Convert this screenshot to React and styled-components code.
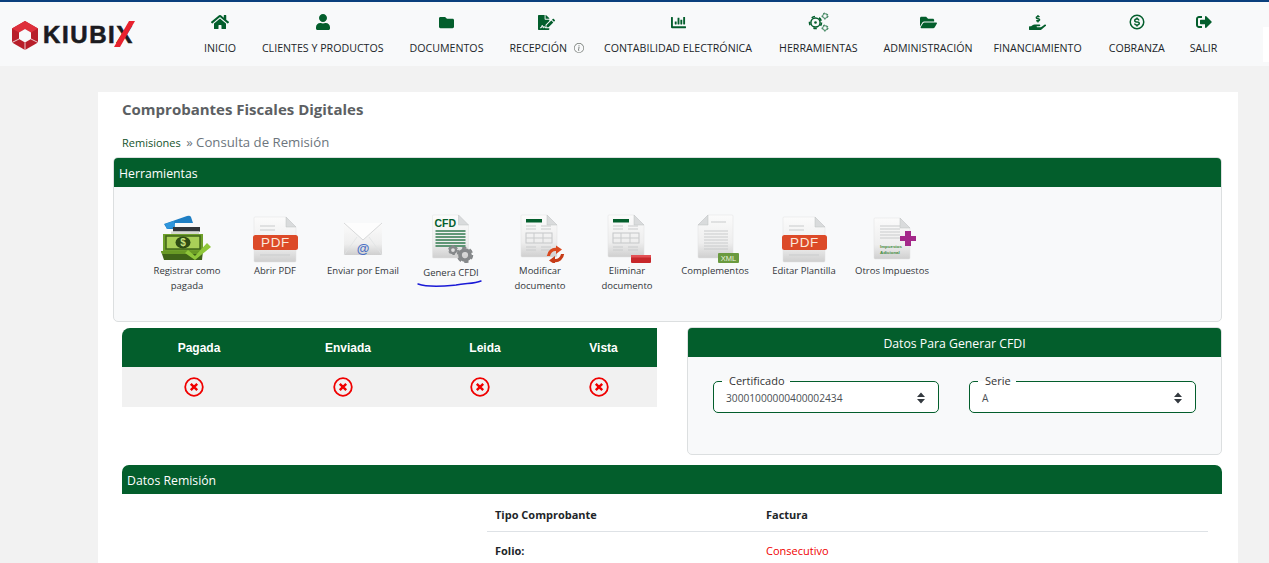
import React from "react";
import styled, { createGlobalStyle } from "styled-components";
import {
  FaHome, FaUser, FaFolder, FaFileSignature, FaChartBar, FaFolderOpen,
  FaHandHoldingUsd, FaSignOutAlt,
} from "react-icons/fa";
import { BsInfoCircle } from "react-icons/bs";
import { BiDollarCircle } from "react-icons/bi";

const GREEN = "#035e2c";
const SANS = `"Open Sans", "Liberation Sans", sans-serif`;

const Global = createGlobalStyle`
  html, body { margin: 0; padding: 0; background: #f2f2f2; }
  body { font-family: ${SANS}; overflow: hidden; }
  #root { height: 563px; overflow: hidden; }
  * { box-sizing: border-box; }
`;

const TopBar = styled.header`
  display: flex;
  height: 66px;
  background: #f8f9fa;
  border-top: 2px solid #0a3f7d;
`;
const LogoBox = styled.div`
  width: 204px;
  flex: none;
  display: flex;
  align-items: flex-start;
  padding: 19px 0 0 11px;
`;
const LogoWord = styled.span`
  position: relative;
  font-family: "Liberation Sans", Arial, sans-serif;
  font-weight: 700;
  font-size: 24px;
  line-height: 27px;
  letter-spacing: 1.6px;
  color: #1b1b1f;
  margin-left: 4px;
  -webkit-text-stroke: 0.6px #1b1b1f;
`;
const LogoSlash = styled.svg`
  position: absolute;
  right: -2px;
  top: -1px;
`;
const Nav = styled.nav`
  display: flex;
  flex: 1;
  padding-top: 10px;
`;
const NavItem = styled.a`
  display: flex;
  flex-direction: column;
  align-items: center;
  flex: none;
  margin-right: ${(p) => p.$gap}px;
  color: #212529;
`;
const NavIcon = styled.span`
  height: 20px;
  display: flex;
  align-items: center;
  justify-content: center;
  color: ${GREEN};
`;
const NavLabel = styled.span`
  display: flex;
  align-items: center;
  gap: 7px;
  margin-top: 8px;
  font-size: 10.65px;
  line-height: 16px;
  white-space: nowrap;
`;
const InfoMark = styled(BsInfoCircle)`
  color: #6f7570;
`;
const CornerTab = styled.div`
  width: 6px;
  height: 35px;
  margin-top: 15px;
  margin-left: auto;
  background: #fff;
  flex: none;
`;
const Card = styled.main`
  width: 1140px;
  margin: 26px 0 0 98px;
  padding: 7px 16px 0 15px;
  background: #fff;
  height: 500px;
`;
const Title = styled.h1`
  margin: 0 0 0 9px;
  font-size: 15px;
  line-height: 20px;
  font-weight: 700;
  color: #5c5f63;
`;
const Crumbs = styled.div`
  margin: 13px 0 0 9px;
  font-size: 13.2px;
  line-height: 20px;
  color: #6c757d;
`;
const CrumbLink = styled.a`
  font-size: 11px;
  margin-right: 2px;
  color: #14532d;
`;
const Panel = styled.section`
  border: 1px solid #dcdfe0;
  border-radius: 5px;
  background: #f8f9fa;
  overflow: hidden;
`;
const PanelHead = styled.div`
  height: 29px;
  padding-left: ${(p) => (p.$center ? 0 : 5)}px;
  background: ${GREEN};
  color: #fff;
  font-size: 12.25px;
  line-height: 31px;
  text-align: ${(p) => (p.$center ? "center" : "left")};
`;
const ToolsPanel = styled(Panel)`
  margin-top: 4px;
  height: 165px;
`;
const ToolRow = styled.div`
  display: flex;
  padding: 26px 0 0 29px;
`;
const Tool = styled.div`
  position: relative;
  width: ${(p) => p.$w}px;
  flex: none;
  display: flex;
  flex-direction: column;
  align-items: center;
`;
const ToolLabel = styled.span`
  margin-top: ${(p) => p.$drop || 0}px;
  font-size: 9.5px;
  line-height: 15px;
  text-align: center;
  white-space: nowrap;
  color: #33373a;
`;
const HandLine = styled.svg`
  position: absolute;
  left: 9px;
  top: 66px;
`;
const Row = styled.div`
  display: flex;
  justify-content: space-between;
  margin: 5px 0 0 9px;
`;
const StatusTable = styled.div`
  width: 535px;
  height: 79px;
  margin-top: 1px;
  display: grid;
  grid-template-columns: 154px 144px 130px 107px;
  grid-template-rows: 39px 40px;
  background: #f1f1f1;
  border-top-left-radius: 8px;
  overflow: hidden;
`;
const StatusHead = styled.div`
  background: ${GREEN};
  color: #fff;
  font-family: "Liberation Sans", Arial, sans-serif;
  font-weight: 700;
  font-size: 12px;
  display: flex;
  align-items: center;
  justify-content: center;
`;
const StatusCell = styled.div`
  display: flex;
  align-items: center;
  justify-content: center;
  padding-right: 10px;
`;
const DataPanel = styled(Panel)`
  width: 535px;
  height: 128px;
`;
const Fields = styled.div`
  display: flex;
  gap: 30px;
  padding: 17px 0 0 25px;
`;
const Field = styled.fieldset`
  width: ${(p) => p.$w}px;
  height: 39px;
  margin: 0;
  padding: 0 13px 0 12px;
  border: 1px solid ${GREEN};
  border-radius: 5px;
  display: flex;
  background: #fff;
`;
const Legend = styled.legend`
  margin-left: -4px;
  padding: 0 5px 0 7px;
  font-size: 11px;
  line-height: 14px;
  color: #333;
`;
const FieldValue = styled.div`
  flex: 1;
  display: flex;
  align-items: center;
  justify-content: space-between;
  font-size: 10.2px;
  line-height: 22px;
  height: 22px;
  margin-top: -1px;
  color: #4b5055;
`;
const DetailPanel = styled.section`
  margin: 10px 0 0 9px;
`;
const DetailHead = styled(PanelHead)`
  border-radius: 7px 7px 0 0;
`;
const DetailRow = styled.div`
  display: grid;
  grid-template-columns: 271px 1fr;
  margin: 0 14px 0 365px;
  padding: ${(p) => p.$pad}px 0 0 8px;
  height: ${(p) => p.$h}px;
  align-items: center;
  font-size: 11px;
  border-bottom: ${(p) => (p.$line ? "1px solid #dee2e6" : "none")};
`;
const DetailKey = styled.strong`
  font-weight: 700;
  color: #212529;
`;
const DetailValue = styled.span`
  color: ${(p) => p.$color};
  font-weight: ${(p) => p.$weight};
`;
const HiddenDefs = styled.svg`
  position: absolute;
  width: 0;
  height: 0;
`;

function SmallGear({ x, y, r }) {
  return (
    <g transform={`translate(${x} ${y})`} fill="none" stroke={GREEN}>
      <circle r={r} strokeWidth={r * 0.32} />
      <circle r={r * 1.3} strokeWidth={r * 0.35} strokeDasharray={`${r * 0.75} ${r * 0.95}`} />
    </g>
  );
}
const GearsIcon = () => (
  <svg width="21" height="20" viewBox="0 0 21 20">
    <SmallGear x={7.5} y={10.5} r={4.6} />
    <circle cx="7.5" cy="10.5" r="1.3" fill={GREEN} />
    <SmallGear x={17} y={4} r={2.3} />
    <SmallGear x={17} y={16} r={2.3} />
  </svg>
);

const NAV = [
  { label: "INICIO", gap: 26, icon: <FaHome size={18} /> },
  { label: "CLIENTES Y PRODUCTOS", gap: 26, icon: <FaUser size={16} /> },
  { label: "DOCUMENTOS", gap: 26, icon: <FaFolder size={15} /> },
  { label: "RECEPCIÓN", gap: 20, icon: <FaFileSignature size={17} />, info: true },
  { label: "CONTABILIDAD ELECTRÓNICA", gap: 27, icon: <FaChartBar size={15} /> },
  { label: "HERRAMIENTAS", gap: 26, icon: <GearsIcon /> },
  { label: "ADMINISTRACIÓN", gap: 21, icon: <FaFolderOpen size={17} /> },
  { label: "FINANCIAMIENTO", gap: 27, icon: <FaHandHoldingUsd size={17} /> },
  { label: "COBRANZA", gap: 25, icon: <BiDollarCircle size={18} /> },
  { label: "SALIR", gap: 0, icon: <FaSignOutAlt size={16} /> },
];

const Sheet = ({ x = 0, y = 0, w = 36, h = 43, flip }) => (
  <g transform={`translate(${x} ${y})`}>
    {flip ? (
      <>
        <path d={`M10 0H${w - 1}Q${w} 0 ${w} 1V${h - 1}Q${w} ${h} ${w - 1} ${h}H1Q0 ${h} 0 ${h - 1}V10Z`} fill="url(#sheet)" stroke="#e2e2e2" strokeWidth=".5" />
        <path d="M10 0V10H0Z" fill="#d9dbdc" stroke="#bfc1c2" strokeWidth=".5" />
      </>
    ) : (
      <>
        <path d={`M1 0H${w - 10}L${w} 10V${h - 1}Q${w} ${h} ${w - 1} ${h}H1Q0 ${h} 0 ${h - 1}V1Q0 0 1 0Z`} fill="url(#sheet)" stroke="#e2e2e2" strokeWidth=".5" />
        <path d={`M${w - 10} 0V10H${w}Z`} fill="#d9dbdc" stroke="#bfc1c2" strokeWidth=".5" />
      </>
    )}
  </g>
);

const Icon = ({ children, h = 50 }) => (
  <svg width="54" height={h} viewBox="0 0 54 50">{children}</svg>
);

const Lines = ({ x, ys, w, color = "#c9cbcc", sw = 1 }) =>
  ys.map((y) => <path key={y} d={`M${x} ${y}h${w}`} stroke={color} strokeWidth={sw} />);

const CashIcon = () => (
  <Icon>
    <path d="M4 11L27 3q3-1 4 1l2 6H15l-1 6H7z" fill="#1f7fc4" />
    <path d="M5 11l9-3 1 6-8 2z" fill="#2f96dc" />
    <rect x="13" y="14" width="27" height="4.5" fill="#33363a" />
    <rect x="11" y="18.5" width="28" height="3" fill="#d6d9cf" />
    <rect x="3" y="21" width="40" height="17" fill="#6fa02b" />
    <rect x="6" y="23" width="34" height="13" fill="#a9cf58" stroke="#41661a" strokeWidth="1.5" />
    <ellipse cx="23" cy="29.5" rx="7.5" ry="6" fill="#2f4c14" />
    <text x="23" y="33" textAnchor="middle" fontFamily="Liberation Sans" fontWeight="700" fontSize="10" fill="#c8e07e">$</text>
    <path d="M1 38h42l-1 9H4z" fill="#3f6418" />
    <path d="M1 38h40v3H2z" fill="#699a25" />
    <path d="M28 37l7 6 12-13 4 4-16 13-10-7z" fill="#8fc73a" />
  </Icon>
);

const PdfIcon = () => (
  <Icon>
    <Sheet x={6} y={4} w={42} h={45} />
    <Lines x={12} ys={[13, 17]} w={15} />
    <Lines x={12} ys={[42]} w={30} />
    <rect x="5" y="22" width="45" height="15" rx="2.5" fill="#dc4a28" />
    <text x="27.5" y="34" textAnchor="middle" fontFamily="Liberation Sans" fontWeight="400" fontSize="13.5" letterSpacing=".7" fill="#fbe9de">PDF</text>
  </Icon>
);

const MailIcon = () => (
  <Icon>
    <rect x="8" y="10" width="38" height="32" rx="1" fill="url(#sheet)" />
    <path d="M8 10L27 27 46 10" fill="#fdfdfd" stroke="#cfd1d2" strokeWidth=".8" />
    <path d="M8 42L21 24M46 42L33 24" stroke="#e0e2e3" strokeWidth=".8" />
    <text x="27" y="40" textAnchor="middle" fontFamily="Liberation Sans" fontWeight="700" fontSize="13" fill="#4b6fc4">@</text>
  </Icon>
);

const GearGray = ({ x, y, r }) => (
  <g transform={`translate(${x} ${y})`} fill="none" stroke="#85888a">
    <circle r={r} strokeWidth={r * 0.75} />
    <circle r={r * 1.45} strokeWidth={r * 0.4} strokeDasharray={`${r * 0.85} ${r * 0.7}`} />
  </g>
);

const CfdIcon = () => (
  <Icon>
    <Sheet x={8.5} y={2} w={36} h={43} />
    <text x="10.5" y="14" fontFamily="Liberation Sans" fontWeight="700" fontSize="10.5" fill={GREEN}>CFD</text>
    <Lines x={11.5} ys={[18, 21, 24, 27, 30, 33]} w={30} color="#2f7a4e" sw={1.4} />
    <GearGray x={29} y={37} r={3} />
    <GearGray x={41} y={42} r={5} />
  </Icon>
);

const TableDoc = () => (
  <>
    <Sheet x={8} y={2} w={36} h={42} />
    <rect x="13" y="6" width="16" height="3.5" fill={GREEN} />
    <Lines x={13} ys={[13, 16]} w={10} />
    <Lines x={28} ys={[13, 16]} w={10} />
    <rect x="13" y="20" width="26" height="10" fill="none" stroke="#c4c6c7" />
    <path d="M13 25h26M21 20v10M30 20v10" stroke="#c9cbcc" />
    <Lines x={13} ys={[34, 37]} w={10} />
    <Lines x={28} ys={[34, 37]} w={10} />
  </>
);

const ModifyIcon = () => (
  <Icon>
    <TableDoc />
    <path d="M35.5 43a7 7 0 0 1 8-6.5" fill="none" stroke="#d9491f" strokeWidth="3.2" />
    <path d="M43 32.5l6 4-6 4.5z" fill="#d9491f" />
    <path d="M49.5 41a7 7 0 0 1-8 6.5" fill="none" stroke="#c63c17" strokeWidth="3.2" />
    <path d="M42 51.5l-6-4 6-4.5z" fill="#c63c17" />
  </Icon>
);

const RemoveIcon = () => (
  <Icon>
    <TableDoc />
    <rect x="31" y="42" width="20" height="8" rx="1" fill="#c7272b" />
    <rect x="31" y="42" width="20" height="2.5" fill="#e25155" />
  </Icon>
);

const XmlIcon = () => (
  <Icon>
    <Sheet x={10} y={2} w={35} h={43} flip />
    <Lines x={23} ys={[9]} w={15} />
    <Lines x={16} ys={[18, 21, 24, 27, 30, 33, 36]} w={24} />
    <rect x="30" y="40" width="21" height="10" rx="1" fill="#6a9a3f" />
    <text x="40.5" y="48" textAnchor="middle" fontFamily="Liberation Sans" fontSize="7.5" fill="#e9f2dc">XML</text>
  </Icon>
);

const ExtraIcon = () => (
  <Icon>
    <Sheet x={9} y={5} w={36} h={41} />
    <Lines x={15} ys={[13, 16, 19, 22, 25]} w={20} />
    <text x="15" y="35" fontFamily="Liberation Sans" fontWeight="700" fontSize="4.4" fill="#3f8a3a">Impuestos</text>
    <text x="15" y="41" fontFamily="Liberation Sans" fontWeight="700" fontSize="4.4" fill="#3f8a3a">Adicional</text>
    <path d="M40 18h6v5h5v5h-5v5h-6v-5h-5v-5h5z" fill="#a4298a" />
  </Icon>
);

const TOOLS = [
  { w: 88, icon: <CashIcon />, label: <>Registrar como<br />pagada</> },
  { w: 88, icon: <PdfIcon />, label: "Abrir PDF" },
  { w: 88, icon: <MailIcon />, label: "Enviar por Email" },
  { w: 88, icon: <CfdIcon />, label: "Genera CFDI", drop: 2, mark: true },
  { w: 90, icon: <ModifyIcon />, label: <>Modificar<br />documento</> },
  { w: 84, icon: <RemoveIcon />, label: <>Eliminar<br />documento</> },
  { w: 92, icon: <XmlIcon />, label: "Complementos" },
  { w: 86, icon: <PdfIcon />, label: "Editar Plantilla" },
  { w: 90, icon: <ExtraIcon />, label: "Otros Impuestos" },
];

const Cross = () => (
  <svg width="20" height="20" viewBox="0 0 20 20">
    <circle cx="10" cy="10" r="8.8" fill="none" stroke="#f00000" strokeWidth="1.8" />
    <path d="M6.8 6.8l6.4 6.4M13.2 6.8l-6.4 6.4" stroke="#f00000" strokeWidth="2.4" />
  </svg>
);

const UpDown = () => (
  <svg width="8" height="12" viewBox="0 0 8 12">
    <path d="M4 0.5L8 5H0ZM0 7H8L4 11.5Z" fill="#343a40" />
  </svg>
);

const STATUS = ["Pagada", "Enviada", "Leida", "Vista"];

export default function App() {
  return (
    <>
      <Global />
      <HiddenDefs aria-hidden="true">
        <defs>
          <linearGradient id="sheet" x1="0" y1="0" x2="0" y2="1">
            <stop offset="0" stopColor="#fbfbfb" />
            <stop offset=".65" stopColor="#eeeeee" />
            <stop offset="1" stopColor="#cfcfcf" />
          </linearGradient>
        </defs>
      </HiddenDefs>
      <TopBar>
        <LogoBox>
          <svg width="28" height="29" viewBox="0 0 28 29">
            <path d="M14 0L27 7.5V21.5L14 29 1 21.5V7.5Z" fill="#b81e2a" />
            <path d="M1 7.5L14 0 27 7.5 20 11.5 14 8 8 11.5Z" fill="#de2f3b" />
            <path d="M14 8L20 11.5V18L14 21.5 8 18V11.5Z" fill="#f8f9fa" />
            <path d="M14 21.5V29M8 18L1 21.5M20 18L27 21.5" stroke="#f8f9fa" strokeWidth="0.8" />
          </svg>
          <LogoWord>
            KIUBIX
            <LogoSlash width="22" height="28" viewBox="0 0 22 28">
              <path d="M21 1H15L0 27H6Z" fill="#e8222e" />
            </LogoSlash>
          </LogoWord>
        </LogoBox>
        <Nav>
          {NAV.map((n) => (
            <NavItem key={n.label} $gap={n.gap}>
              <NavIcon>{n.icon}</NavIcon>
              <NavLabel>
                {n.label}
                {n.info && <InfoMark size={10} />}
              </NavLabel>
            </NavItem>
          ))}
          <CornerTab />
        </Nav>
      </TopBar>
      <Card>
        <Title>Comprobantes Fiscales Digitales</Title>
        <Crumbs>
          <CrumbLink>Remisiones</CrumbLink> » Consulta de Remisión
        </Crumbs>
        <ToolsPanel>
          <PanelHead>Herramientas</PanelHead>
          <ToolRow>
            {TOOLS.map((t, i) => (
              <Tool key={i} $w={t.w}>
                {t.icon}
                <ToolLabel $drop={t.drop}>{t.label}</ToolLabel>
                {t.mark && (
                  <HandLine width="70" height="10" viewBox="0 0 70 10">
                    <path d="M2 5C14 9 30 7 40 6C50 4 58 5 65 2" fill="none" stroke="#1a1ad6" strokeWidth="1.4" strokeLinecap="round" />
                  </HandLine>
                )}
              </Tool>
            ))}
          </ToolRow>
        </ToolsPanel>
        <Row>
          <StatusTable>
            {STATUS.map((s) => <StatusHead key={s}>{s}</StatusHead>)}
            {STATUS.map((s) => <StatusCell key={s}><Cross /></StatusCell>)}
          </StatusTable>
          <DataPanel>
            <PanelHead $center>Datos Para Generar CFDI</PanelHead>
            <Fields>
              <Field $w={226}>
                <Legend>Certificado</Legend>
                <FieldValue>30001000000400002434<UpDown /></FieldValue>
              </Field>
              <Field $w={227}>
                <Legend>Serie</Legend>
                <FieldValue>A<UpDown /></FieldValue>
              </Field>
            </Fields>
          </DataPanel>
        </Row>
        <DetailPanel>
          <DetailHead>Datos Remisión</DetailHead>
          <DetailRow $h={38} $pad={3} $line>
            <DetailKey>Tipo Comprobante</DetailKey>
            <DetailValue $color="#212529" $weight={700}>Factura</DetailValue>
          </DetailRow>
          <DetailRow $h={36} $pad={0}>
            <DetailKey>Folio:</DetailKey>
            <DetailValue $color="#f00000" $weight={400}>Consecutivo</DetailValue>
          </DetailRow>
        </DetailPanel>
      </Card>
    </>
  );
}
